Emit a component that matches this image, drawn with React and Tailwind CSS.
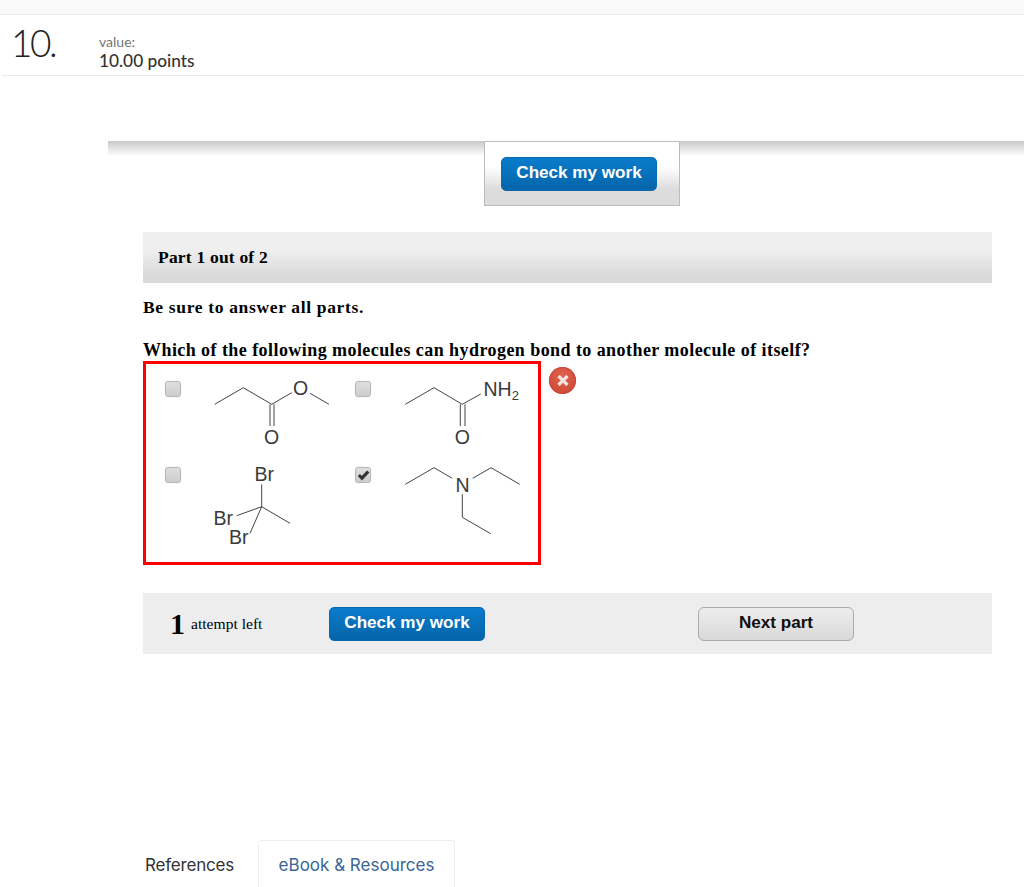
const serif = "font-['Liberation_Serif',serif]";
const arial = "font-['Liberation_Sans',sans-serif]";

function Mol({ box, height = 86, children }) {
  const [x, y] = box;
  return (
    <svg
      width="140"
      height={height}
      viewBox={`${x} ${y} 140 ${height}`}
      className="shrink-0 overflow-visible"
      fill="none"
      stroke="#444"
      strokeWidth="1"
    >
      {children}
    </svg>
  );
}

const T = ({ x, y, children, anchor = "start", size = 19.5 }) => (
  <text x={x} y={y} textAnchor={anchor} fontSize={size} fill="#3a3a3a" stroke="none" fontFamily="Liberation Sans, sans-serif">
    {children}
  </text>
);

function Check({ checked }) {
  return (
    <div className="mt-[6px] flex h-4 w-4 shrink-0 items-center justify-center rounded-[3px] border border-[#b8b8b8] bg-[linear-gradient(#dedede,#cdcdcd)] shadow-[0_0_1px_#c8c8c8]">
      {checked && (
        <svg width="13" height="11" viewBox="0 0 13 11">
          <path d="M0.8 6 L3 4 L4.8 6 L10 0.6 L12.4 2.4 L5 10.6 Z" fill="#333" />
        </svg>
      )}
    </div>
  );
}

function Cell({ checked, children }) {
  return (
    <div className="flex gap-6">
      <Check checked={checked} />
      {children}
    </div>
  );
}

function BlueButton() {
  return (
    <button className={`h-[34px] w-[156px] shrink-0 rounded-[5px] border border-[#0a69ae] bg-[linear-gradient(#0a7bcb,#0465a9)] pb-[3px] text-[17.1px] leading-[28px] font-bold text-white ${arial}`}>
      Check my work
    </button>
  );
}

export default function App() {
  return (
    <div className="h-[887px] w-[1024px] overflow-hidden bg-white">
      <div className="h-[15px] border-b border-[#e9e9e9] bg-[#f9f9f9]" />
      <div className="ml-[2px] flex h-[61px] border-b border-[#ebebeb]">
        <div className="w-[97px] pl-[9px] pt-[3px] font-['Lato',sans-serif] text-[37px] leading-[50px] font-light tracking-[-2.5px] text-[#222]">10.</div>
        <div className="pt-[18px] font-['Lato',sans-serif]">
          <div className="text-[14px] leading-[17px] text-[#747474]">value:</div>
          <div className="text-[17.3px] leading-[22px] font-medium text-[#333]">10.00 points</div>
        </div>
      </div>

      <div className="ml-[108px] mt-[65px] h-[65px] bg-[linear-gradient(#c8c8c8,#ffffff_15px)]">
        <div className="ml-[376px] flex h-[65px] w-[196px] items-start border border-[#bcbcbc] bg-[linear-gradient(#ffffff_10%,#ffffff_40%,#dcdcdc_75%)] pl-[16px] pt-[15px]">
          <BlueButton />
        </div>
      </div>

      <div className={`ml-[143px] w-[849px] ${serif}`}>
        <div className="mt-[26px] flex h-[51px] items-center bg-[linear-gradient(#efefef_35%,#dadada_85%)] pl-[15px] text-[17.5px] font-bold tracking-[0.2px] text-black">
          Part 1 out of 2
        </div>
        <p className="mt-[14px] text-[17.5px] leading-[21px] font-bold tracking-[0.66px] text-black">Be sure to answer all parts.</p>
        <p className="mt-[22px] text-[18px] leading-[21px] font-bold tracking-[0.435px] text-black">
          Which of the following molecules can hydrogen bond to another molecule of itself?
        </p>

        <div className="flex items-start gap-2">
          <div className="box-border grid h-[204px] w-[398px] grid-cols-[190px_190px] grid-rows-[86px_86px] border-[3px] border-[#ff0000] pl-[19px] pt-[11px]">
            <Cell>
              <Mol box={[205, 375]}>
                <path d="M214.7 404.3 L243.3 387.7 L271.7 404.3 L291.7 392.7 M310 393.3 L329 404.3 M270 404.3 V426 M274 404.3 V426" />
                <T x={300.7} y={395} anchor="middle">O</T>
                <T x={271.7} y={444} anchor="middle">O</T>
              </Mol>
            </Cell>
            <Cell>
              <Mol box={[395, 375]}>
                <path d="M405.3 404.3 L434 387.7 L462.3 404.3 L480.7 394 M460.3 404.3 V426 M465 404.3 V426" />
                <T x={483.5} y={395.5}>NH</T>
                <T x={511.8} y={399.5} size={13}>2</T>
                <T x={462.3} y={444} anchor="middle">O</T>
              </Mol>
            </Cell>
            <Cell>
              <Mol box={[205, 461]}>
                <path d="M261.7 484.3 V506.7 L290 523.3 M261.7 506.7 L236.7 515.7 M261.7 506.7 L250 533.3" />
                <T x={264.3} y={481} anchor="middle">Br</T>
                <T x={213.5} y={525}>Br</T>
                <T x={229} y={544}>Br</T>
              </Mol>
            </Cell>
            <Cell checked>
              <Mol box={[395, 461]}>
                <path d="M405.3 484.3 L434 467.7 L452.3 478.3 M472.7 478.3 L491 467.7 L519.7 484.3 M462.3 494.3 V517.3 L490.7 533.7" />
                <T x={462.5} y={491.5} anchor="middle">N</T>
              </Mol>
            </Cell>
          </div>
          <div className="mt-[6px] flex h-[27px] w-[27px] items-center justify-center rounded-full bg-[radial-gradient(circle_at_50%_35%,#e0644f,#c94332)] shadow-[inset_0_0_0_1px_#c9483a]">
            <svg width="12" height="11" viewBox="0 0 12 11">
              <path d="M1.5 1 L10.5 10 M10.5 1 L1.5 10" stroke="#f4e4e0" strokeWidth="3.2" strokeLinecap="butt" />
            </svg>
          </div>
        </div>

        <div className="mt-[28px] flex h-[61px] items-start bg-[#ededed] pt-[14px]">
          <div className="ml-[27px] w-[21px] text-[30px] leading-[34px] font-bold text-black">1</div>
          <div className="w-[138px] text-[15.6px] leading-[34px] text-black">attempt left</div>
          <BlueButton />
          <button className={`ml-[213px] h-[34px] w-[156px] shrink-0 rounded-[6px] border border-[#ababab] bg-[linear-gradient(#ededed,#d9d9d9)] pb-[3px] text-[17.1px] leading-[28px] font-bold text-[#111] ${arial}`}>
            Next part
          </button>
        </div>
      </div>

      <div className="ml-[145px] mt-[186px] flex font-['Inter',sans-serif] text-[17px]">
        <div className="w-[113px] pt-[15px] leading-[21px] tracking-[-0.2px] text-[#333]">References</div>
        <div className="h-[60px] w-[197px] rounded-t-[4px] border border-b-0 border-[#eeeeee] pt-[14px] text-center leading-[21px] text-[#3a6596]">
          eBook &amp; Resources
        </div>
      </div>
    </div>
  );
}
